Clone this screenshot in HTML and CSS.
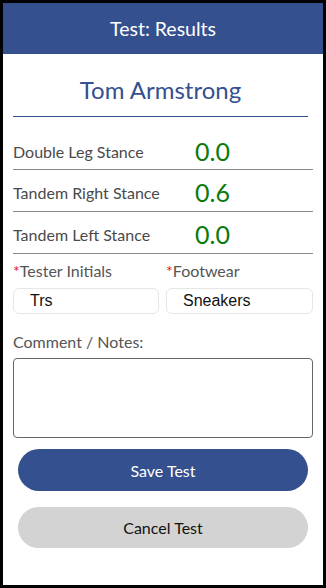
FILE: index.html
```html
<!DOCTYPE html>
<html>
<head>
<meta charset="utf-8">
<link rel="stylesheet" href="styles.css">
</head>
<body>
<div class="screen">
  <header class="topbar">Test: Results</header>
  <main class="content">
    <h1 class="name">Tom Armstrong</h1>
    <div class="results">
      <div class="row"><span class="label">Double Leg Stance</span><span class="value">0.0</span></div>
      <div class="row"><span class="label">Tandem Right Stance</span><span class="value">0.6</span></div>
      <div class="row"><span class="label">Tandem Left Stance</span><span class="value">0.0</span></div>
    </div>
    <div class="fields">
      <div class="field">
        <div class="flabel"><span class="req">*</span>Tester Initials</div>
        <div class="input">Trs</div>
      </div>
      <div class="field">
        <div class="flabel"><span class="req">*</span>Footwear</div>
        <div class="input">Sneakers</div>
      </div>
    </div>
    <div class="notes-label">Comment / Notes:</div>
    <div class="notes"></div>
    <div class="buttons">
      <button class="btn save">Save Test</button>
      <button class="btn cancel">Cancel Test</button>
    </div>
  </main>
</div>
</body>
</html>
```
FILE: styles.css
```css
html, body {
  margin: 0;
  padding: 0;
  background: #000;
}
body {
  font-family: Lato, "Open Sans", sans-serif;
}
.screen {
  margin: 3px;
  width: 320px;
  height: 582px;
  background: #fff;
  display: flex;
  flex-direction: column;
}
.topbar {
  height: 51px;
  background: #34508f;
  color: #fff;
  font-size: 19.5px;
  display: flex;
  align-items: center;
  justify-content: center;
}
.content {
  padding: 0 10px 0 10px;
  display: flex;
  flex-direction: column;
}
.name {
  margin: 21px 5px 0 0;
  font-weight: 400;
  font-size: 24px;
  color: #34508f;
  text-align: center;
  height: 41px;
  line-height: 30px;
  border-bottom: 1px solid #34508f;
}
.results {
  display: flex;
  flex-direction: column;
}
.row {
  display: flex;
  align-items: center;
  height: 41px;
  border-bottom: 1px solid #8a8a8a;
  padding-top: 0;
}
.row:first-child {
  height: 51px;
  padding-top: 1px;
}
.row:first-child .label { padding-top: 16px; }
.row:first-child .value { padding-top: 14px; }
.label {
  width: 182px;
  font-size: 16px;
  color: #4a4a4a;
  padding-top: 4px;
}
.value {
  font-size: 25px;
  color: #0a7a0a;
  padding-top: 2px;
}
.fields {
  display: grid;
  grid-template-columns: 146px 147px;
  column-gap: 7px;
  margin-top: 8px;
}
.flabel {
  font-size: 16px;
  color: #555;
  height: 18px;
  line-height: 18px;
}
.req {
  color: #e02020;
}
.input {
  margin-top: 8px;
  height: 26px;
  border: 1px solid #e6e6e6;
  border-radius: 6px;
  box-sizing: border-box;
  padding-left: 16px;
  font-family: "Liberation Sans", Arial, sans-serif;
  font-size: 16px;
  color: #111;
  line-height: 24px;
}
.notes-label {
  margin-top: 19px;
  font-size: 16px;
  color: #555;
  height: 18px;
  line-height: 18px;
}
.notes {
  margin-top: 7px;
  width: 300px;
  height: 80px;
  box-sizing: border-box;
  border: 1px solid #666;
  border-radius: 4px;
}
.buttons {
  display: flex;
  flex-direction: column;
  gap: 16px;
  margin: 11px 0 0 5px;
}
.btn {
  width: 290px;
  height: 42px;
  border: none;
  border-radius: 21px;
  font-family: Lato, "Open Sans", sans-serif;
  font-size: 16px;
  padding: 0;
}
.save {
  background: #34508f;
  color: #fff;
}
.cancel {
  height: 41px;
  background: #d3d3d3;
  color: #111;
}
```
